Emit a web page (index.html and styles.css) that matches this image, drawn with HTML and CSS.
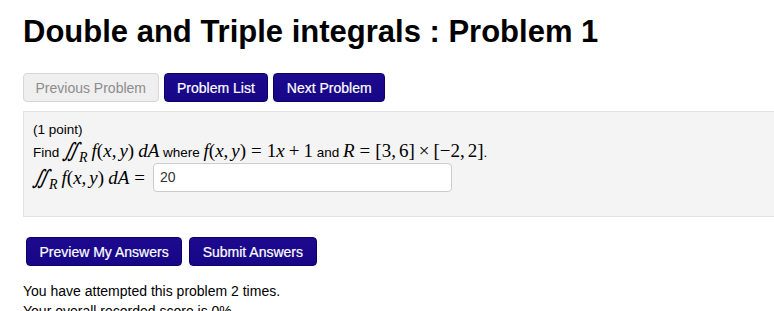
FILE: index.html
```html
<!DOCTYPE html>
<html>
<head>
<meta charset="utf-8">
<link rel="stylesheet" href="styles.css">
</head>
<body>
<div class="page">
  <h1 class="title">Double and Triple integrals : Problem 1</h1>
  <div class="nav">
    <span class="btn btn-disabled">Previous Problem</span>
    <span class="btn btn-primary">Problem List</span>
    <span class="btn btn-primary">Next Problem</span>
  </div>
  <div class="problem">
    <div class="line1">(1 point)</div>
    <div class="line2">Find <span class="math"><span class="int">∬</span><sub class="sub">R</sub><span class="sp"></span><i>f</i>(<i>x</i>,<span class="thin"></span><i>y</i>)<span class="sp"></span><i>dA</i></span> where <span class="math"><i>f</i>(<i>x</i>,<span class="thin"></span><i>y</i>)<span class="rel">=</span>1<i>x</i><span class="bin">+</span>1</span> and <span class="math"><i>R</i><span class="rel">=</span>[3,<span class="thin"></span>6]<span class="bin">×</span>[−2,<span class="thin"></span>2]</span>.</div>
    <div class="line3"><span class="math"><span class="int">∬</span><sub class="sub">R</sub><span class="sp"></span><i>f</i>(<i>x</i>,<span class="thin"></span><i>y</i>)<span class="sp"></span><i>dA</i><span class="rel">=</span></span><span class="input">20</span></div>
  </div>
  <div class="actions">
    <span class="btn btn-primary">Preview My Answers</span>
    <span class="btn btn-primary">Submit Answers</span>
  </div>
  <div class="status first">You have attempted this problem 2 times.</div>
  <div class="status">Your overall recorded score is 0%.</div>
</div>
</body>
</html>
```
FILE: styles.css
```css
html, body {
  margin: 0;
  padding: 0;
  background: #fff;
}
.page {
  padding-left: 23px;
  font-family: "Liberation Sans", Arial, sans-serif;
  color: #000;
}
.title {
  margin: 0;
  padding-top: 14px;
  font-size: 31px;
  line-height: 36px;
  font-weight: bold;
}
.nav {
  display: flex;
  gap: 5px;
  margin-top: 23px;
}
.btn {
  display: inline-flex;
  align-items: center;
  height: 29px;
  box-sizing: border-box;
  padding: 0 11.5px;
  font-size: 14px;
  border-radius: 4px;
  border: 1px solid;
}
.btn-disabled {
  background: #efefef;
  border-color: #d6d6d6;
  color: #8c8c8c;
}
.btn-primary {
  padding: 0 12.5px;
  background: linear-gradient(#1d0a8f, #170686);
  border-color: #0c0066;
  color: #fff;
  -webkit-text-stroke: 0.2px #fff;
}
.problem {
  margin-top: 9px;
  background: #f4f4f4;
  border: 1px solid #e3e3e3;
  border-right: none;
  height: 106px;
  box-sizing: border-box;
  padding: 9px 9px 0;
  font-size: 13.5px;
}
.line1 {
  line-height: 18px;
}
.line2 {
  height: 23px;
  line-height: 22px;
  white-space: nowrap;
}
.line3 {
  display: flex;
  align-items: center;
  height: 30px;
  white-space: nowrap;
}
.math {
  font-family: "Liberation Serif", "Times New Roman", serif;
  font-size: 19px;
}
.math i {
  font-style: italic;
}
.int {
  display: inline-block;
  font-style: italic;
  font-size: 20px;
  transform: skewX(-8deg);
}
.sub {
  font-style: italic;
  font-size: 14px;
  vertical-align: -5px;
  line-height: 0;
}
.sp {
  display: inline-block;
  width: 4px;
}
.thin {
  display: inline-block;
  width: 3px;
}
.rel {
  margin: 0 5px;
}
.bin {
  margin: 0 4px;
}
.line3 .math {
  margin-right: 3px;
}
.input {
  display: inline-flex;
  align-items: center;
  width: 299px;
  height: 29px;
  box-sizing: border-box;
  padding: 0 6px;
  background: #fff;
  border: 1px solid #cccccc;
  border-radius: 4px;
  font-size: 14px;
  color: #333;
}
.actions {
  display: flex;
  gap: 7px;
  margin-top: 20px;
  padding-left: 3px;
}
.status {
  font-size: 14px;
  line-height: 20px;
}
.status.first {
  margin-top: 15px;
}
```
